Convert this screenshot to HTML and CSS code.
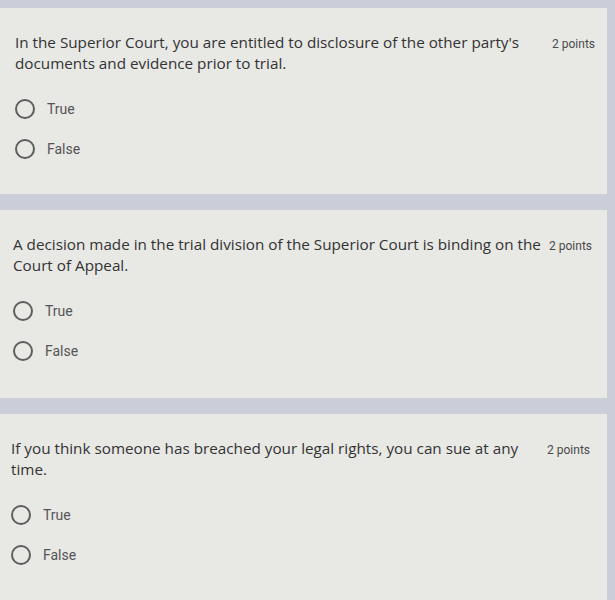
FILE: index.html
```html
<!DOCTYPE html>
<html lang="en">
<head>
    <meta charset="UTF-8">
    <meta name="viewport" content="width=device-width, initial-scale=1.0">
    <title>Quiz</title>
    <link rel="stylesheet" href="styles.css">
</head>
<body>
    <div class="form">
        <!-- Question 1 -->
        <div class="question-card first">
            <div class="question-header">
                <p class="question-title">In the Superior Court, you are entitled to disclosure of the other party's documents and evidence prior to trial.</p>
                <span class="question-points">2 points</span>
            </div>
            <div class="options">
                <label class="option"><span class="radio"></span><span class="option-text">True</span></label>
                <label class="option"><span class="radio"></span><span class="option-text">False</span></label>
            </div>
        </div>

        <!-- Question 2 -->
        <div class="question-card second">
            <div class="question-header">
                <p class="question-title">A decision made in the trial division of the Superior Court is binding on the Court of Appeal.</p>
                <span class="question-points">2 points</span>
            </div>
            <div class="options">
                <label class="option"><span class="radio"></span><span class="option-text">True</span></label>
                <label class="option"><span class="radio"></span><span class="option-text">False</span></label>
            </div>
        </div>

        <!-- Question 3 -->
        <div class="question-card third">
            <div class="question-header">
                <p class="question-title">If you think someone has breached your legal rights, you can sue at any time.</p>
                <span class="question-points">2 points</span>
            </div>
            <div class="options">
                <label class="option"><span class="radio"></span><span class="option-text">True</span></label>
                <label class="option"><span class="radio"></span><span class="option-text">False</span></label>
            </div>
        </div>
    </div>
</body>
</html>
```

FILE: styles.css
```css
/* Basic reset */
* {
    margin: 0;
    padding: 0;
    box-sizing: border-box;
}

body {
    font-family: Roboto, "Liberation Sans", sans-serif;
    background-color: #cbced8;
    color: #3c3c3c;
    padding: 8px 8px 0 0;
}

.form {
    display: flex;
    flex-direction: column;
    gap: 16px;
}

/* Question Card */
.question-card {
    background-color: #e8e8e5;
    height: 186px;
    padding: 24px 12px 0 15px;
}

.second {
    padding-left: 13px;
    padding-right: 15px;
    height: 188px;
}

.third {
    padding-left: 11px;
    padding-right: 17px;
    height: 200px;
}

.question-header {
    display: flex;
    align-items: flex-start;
    gap: 4px;
}

.question-title {
    flex: 1;
    font-family: "Open Sans", Roboto, sans-serif;
    font-size: 15.25px;
    line-height: 21px;
    color: #333;
}

.question-points {
    font-size: 12px;
    color: #4a4a4a;
    margin-top: 5px;
    white-space: nowrap;
}

/* Options */
.options {
    margin-top: 25px;
    display: flex;
    flex-direction: column;
    gap: 20px;
}

.option {
    display: flex;
    align-items: center;
    gap: 12px;
    font-size: 14px;
    color: #555;
    height: 20px;
}

.radio {
    width: 20px;
    height: 20px;
    border: 2px solid #5e5e5e;
    border-radius: 50%;
}
```
